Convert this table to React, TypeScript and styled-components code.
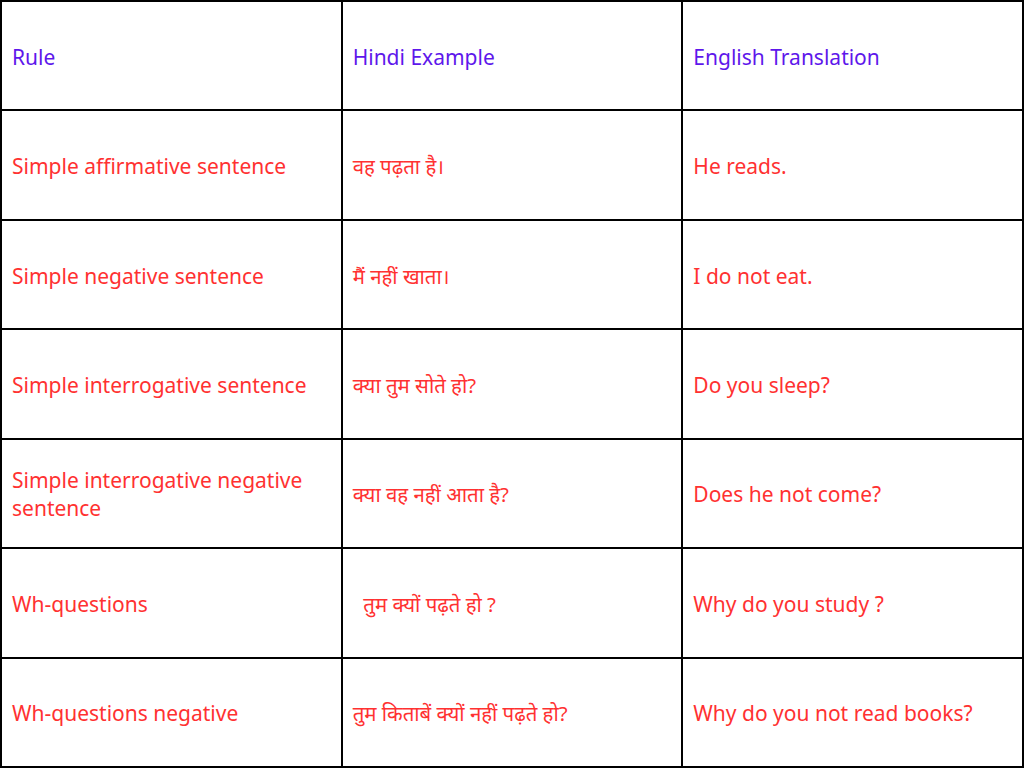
import React from "react";
import styled, { createGlobalStyle } from "styled-components";

const GlobalStyle = createGlobalStyle`
  html, body { margin: 0; padding: 0; background: #ffffff; }
  body { font-family: "Noto Sans", "Open Sans", sans-serif; }
`;

const Table = styled.div`
  width: 1024px;
  height: 768px;
  box-sizing: border-box;
  background: #000000;
  padding: 2px;
  display: grid;
  grid-template-columns: repeat(3, 1fr);
  grid-template-rows: repeat(7, 1fr);
  gap: 2px;
`;

const Cell = styled.div<{ $head?: boolean; $hindi?: boolean }>`
  background: #ffffff;
  display: flex;
  align-items: center;
  padding: 2px 12px 0 10px;
  font-family: "Noto Sans", "Open Sans", sans-serif;
  font-size: ${(p) => (p.$hindi ? "20.4px" : "21px")};
  line-height: 28px;
  color: ${(p) => (p.$head ? "#5e17eb" : "#ff3131")};
  white-space: pre-wrap;
`;

const rows: [string, string, string][] = [
  ["Simple affirmative sentence", "वह पढ़ता है।", "He reads."],
  ["Simple negative sentence", "मैं नहीं खाता।", "I do not eat."],
  ["Simple interrogative sentence", "क्या तुम सोते हो?", "Do you sleep?"],
  ["Simple interrogative negative sentence", "क्या वह नहीं आता है?", "Does he not come?"],
  ["Wh-questions", "  तुम क्यों पढ़ते हो ?", "Why do you study ?"],
  ["Wh-questions negative", "तुम किताबें क्यों नहीं पढ़ते हो?", "Why do you not read books?"],
];

export default function App() {
  return (
    <>
      <GlobalStyle />
      <Table>
        <Cell $head>Rule</Cell>
        <Cell $head>Hindi Example</Cell>
        <Cell $head>English Translation</Cell>
        {rows.map((r, i) => (
          <React.Fragment key={i}>
            <Cell>{r[0]}</Cell>
            <Cell $hindi>{r[1]}</Cell>
            <Cell>{r[2]}</Cell>
          </React.Fragment>
        ))}
      </Table>
    </>
  );
}
